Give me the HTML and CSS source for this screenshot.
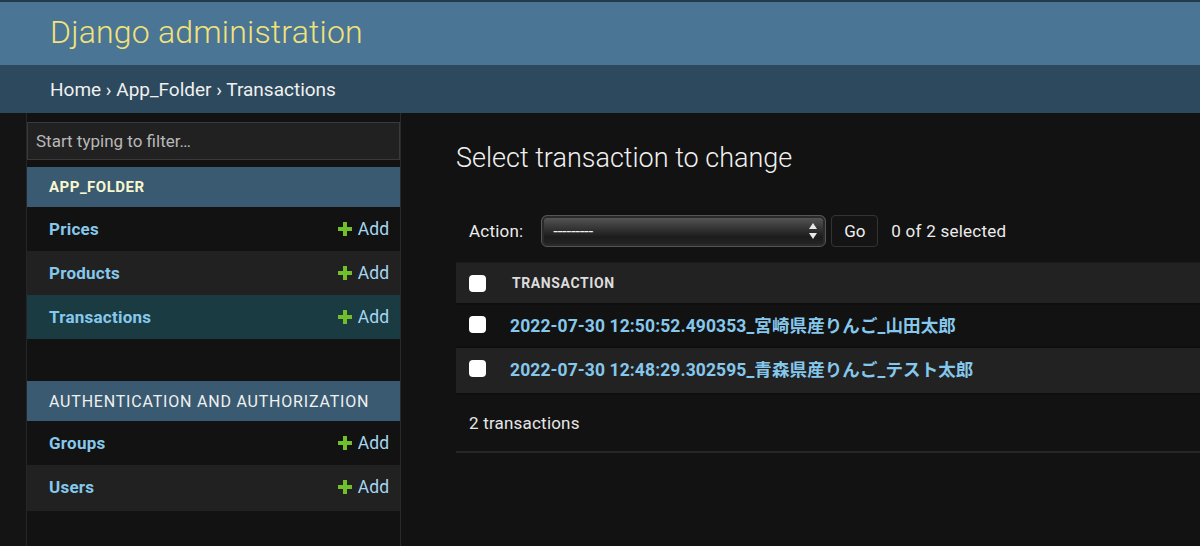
FILE: index.html
```html
<!DOCTYPE html>
<html lang="en">
<head>
<meta charset="utf-8">
<title>Select transaction to change</title>
<link rel="stylesheet" href="styles.css">
</head>
<body>
<header class="header">
  <div class="branding">Django administration</div>
</header>
<nav class="breadcrumbs">Home › App_Folder › Transactions</nav>
<div class="main">
  <div class="toggle"></div>
  <aside class="sidebar">
    <div class="filter">Start typing to filter…</div>
    <div class="module">
      <div class="caption current">APP_FOLDER</div>
      <div class="row"><span class="model">Prices</span><span class="add"><svg class="plus" viewBox="0 0 14 14"><path d="M5 0h4v5h5v4H9v5H5V9H0V5h5z"/></svg>Add</span></div>
      <div class="row alt"><span class="model">Products</span><span class="add"><svg class="plus" viewBox="0 0 14 14"><path d="M5 0h4v5h5v4H9v5H5V9H0V5h5z"/></svg>Add</span></div>
      <div class="row selected"><span class="model">Transactions</span><span class="add"><svg class="plus" viewBox="0 0 14 14"><path d="M5 0h4v5h5v4H9v5H5V9H0V5h5z"/></svg>Add</span></div>
    </div>
    <div class="module">
      <div class="caption">AUTHENTICATION AND AUTHORIZATION</div>
      <div class="row"><span class="model">Groups</span><span class="add"><svg class="plus" viewBox="0 0 14 14"><path d="M5 0h4v5h5v4H9v5H5V9H0V5h5z"/></svg>Add</span></div>
      <div class="row alt tall"><span class="model">Users</span><span class="add"><svg class="plus" viewBox="0 0 14 14"><path d="M5 0h4v5h5v4H9v5H5V9H0V5h5z"/></svg>Add</span></div>
    </div>
  </aside>
  <section class="content">
    <h1 class="title">Select transaction to change</h1>
    <div class="actions">
      <span class="label">Action:</span>
      <div class="select"><span class="dashes">---------</span>
        <svg class="arrows" viewBox="0 0 10 18"><path d="M5 1L9 7H1z"/><path d="M5 17L9 11H1z"/></svg>
      </div>
      <div class="go">Go</div>
      <span class="count">0 of 2 selected</span>
    </div>
    <div class="table">
      <div class="trow thead"><span class="check"></span><span class="colname">TRANSACTION</span></div>
      <div class="trow"><span class="check"></span><span class="tlink">2022-07-30 12:50:52.490353_宮崎県産りんご_山田太郎</span></div>
      <div class="trow alt"><span class="check"></span><span class="tlink">2022-07-30 12:48:29.302595_青森県産りんご_テスト太郎</span></div>
    </div>
    <div class="paginator">2 transactions</div>
  </section>
</div>
</body>
</html>
```
FILE: styles.css
```css
* { box-sizing: border-box; }
html, body { margin: 0; padding: 0; }
body {
  background: #121212;
  color: #e6e6e6;
  font-family: Roboto, "Noto Sans CJK JP", sans-serif;
  width: 1200px;
  height: 546px;
  overflow: hidden;
}
.header {
  height: 65px;
  background: #4a7595;
  border-top: 2px solid #223a4a;
  display: flex;
  align-items: center;
  padding-left: 50px;
}
.branding {
  color: #f2e27a;
  font-size: 32px;
  font-weight: 300;
  letter-spacing: 0.2px;
  margin-top: -4px;
}
.breadcrumbs {
  height: 48px;
  background: #2c495d;
  color: #f0f0f0;
  font-size: 19px;
  display: flex;
  align-items: center;
  padding-left: 50px;
}
.main {
  display: flex;
  height: 433px;
}
.toggle {
  width: 27px;
  flex: none;
  border-right: 1px solid #262626;
  background: #141414;
}
.sidebar {
  width: 374px;
  flex: none;
  border-right: 1px solid #2a2a2a;
  padding-top: 9px;
}
.filter {
  height: 38px;
  background: #212121;
  border: 1px solid #3a3a3a;
  color: #b8b8b8;
  font-size: 17px;
  display: flex;
  align-items: center;
  padding-left: 8px;
  margin-bottom: 7px;
}
.module { margin-bottom: 42px; }
.caption {
  height: 40px;
  background: #395a71;
  color: #f0f0f0;
  font-size: 16px;
  letter-spacing: 0.8px;
  display: flex;
  align-items: center;
  padding-left: 22px;
}
.caption.current {
  color: #f8f6cf;
  font-weight: 700;
  font-size: 15px;
  letter-spacing: 0.5px;
}
.row {
  height: 44px;
  display: flex;
  align-items: center;
  justify-content: space-between;
  padding: 0 11px 1px 22px;
  background: #121212;
}
.row.alt { background: #212121; }
.row.tall { height: 46px; padding-bottom: 2px; }
.row.selected { background: #1a3b42; }
.model {
  color: #86c8ec;
  font-weight: 700;
  font-size: 17px;
  letter-spacing: 0.25px;
}
.add {
  color: #a6d6f2;
  font-size: 17.5px;
  display: flex;
  align-items: center;
}
.plus {
  width: 14px;
  height: 14px;
  fill: #70bf2b;
  margin-right: 6px;
}
.content {
  flex: 1;
  padding-left: 55px;
  min-width: 0;
}
.title {
  margin: 28px 0 0;
  font-size: 27px;
  font-weight: 300;
  color: #f0f0f0;
  line-height: 34px;
}
.actions {
  display: flex;
  align-items: center;
  margin-top: 40px;
  padding-left: 13px;
  height: 32px;
}
.label { font-size: 17px; color: #ececec; margin-right: 18px; letter-spacing: 0.2px; }
.select {
  width: 285px;
  height: 32px;
  border: 1px solid #555;
  border-radius: 6px;
  background: linear-gradient(#5a5a5a 0%, #3a3a3a 35%, #1c1c1c 70%, #262626 100%);
  box-shadow: inset 0 0 0 2px #2a2a2a;
  display: flex;
  align-items: center;
  justify-content: space-between;
  padding: 0 7px 0 11px;
}
.dashes { color: #f0f0f0; font-size: 17px; letter-spacing: -0.3px; }
.arrows { width: 10px; height: 18px; fill: #e8e8e8; }
.go {
  margin-left: 5px;
  width: 47px;
  height: 32px;
  border: 1px solid #333;
  border-radius: 4px;
  background: #141414;
  font-size: 17px;
  color: #f0f0f0;
  display: flex;
  align-items: center;
  justify-content: center;
}
.count { margin-left: 13px; font-size: 17px; color: #ececec; letter-spacing: 0.25px; }
.table {
  margin-top: 15px;
  border-top: 1px solid #1a1a1a;
}
.trow {
  display: flex;
  align-items: center;
  height: 43px;
  padding-left: 13px;
  padding-bottom: 3px;
  background: #121212;
  border-bottom: 2px solid #0e0e0e;
}
.trow.thead { background: #222; height: 42px; padding-bottom: 0; }
.trow.alt { background: #222; height: 47px; padding-bottom: 4px; }
.check {
  width: 17px;
  height: 17px;
  background: #fff;
  border-radius: 4px;
  flex: none;
  margin-right: 24px;
}
.colname {
  font-size: 14px;
  font-weight: 700;
  color: #dcdcdc;
  margin-left: 2px;
  letter-spacing: 0.6px;
}
.tlink {
  color: #86c8ec;
  font-weight: 700;
  font-size: 17.5px;
  letter-spacing: 0.1px;
}
.paginator {
  height: 58px;
  border-bottom: 2px solid #262626;
  display: flex;
  align-items: center;
  padding-left: 13px;
  font-size: 17px;
  color: #e6e6e6;
  letter-spacing: 0.2px;
}
```
